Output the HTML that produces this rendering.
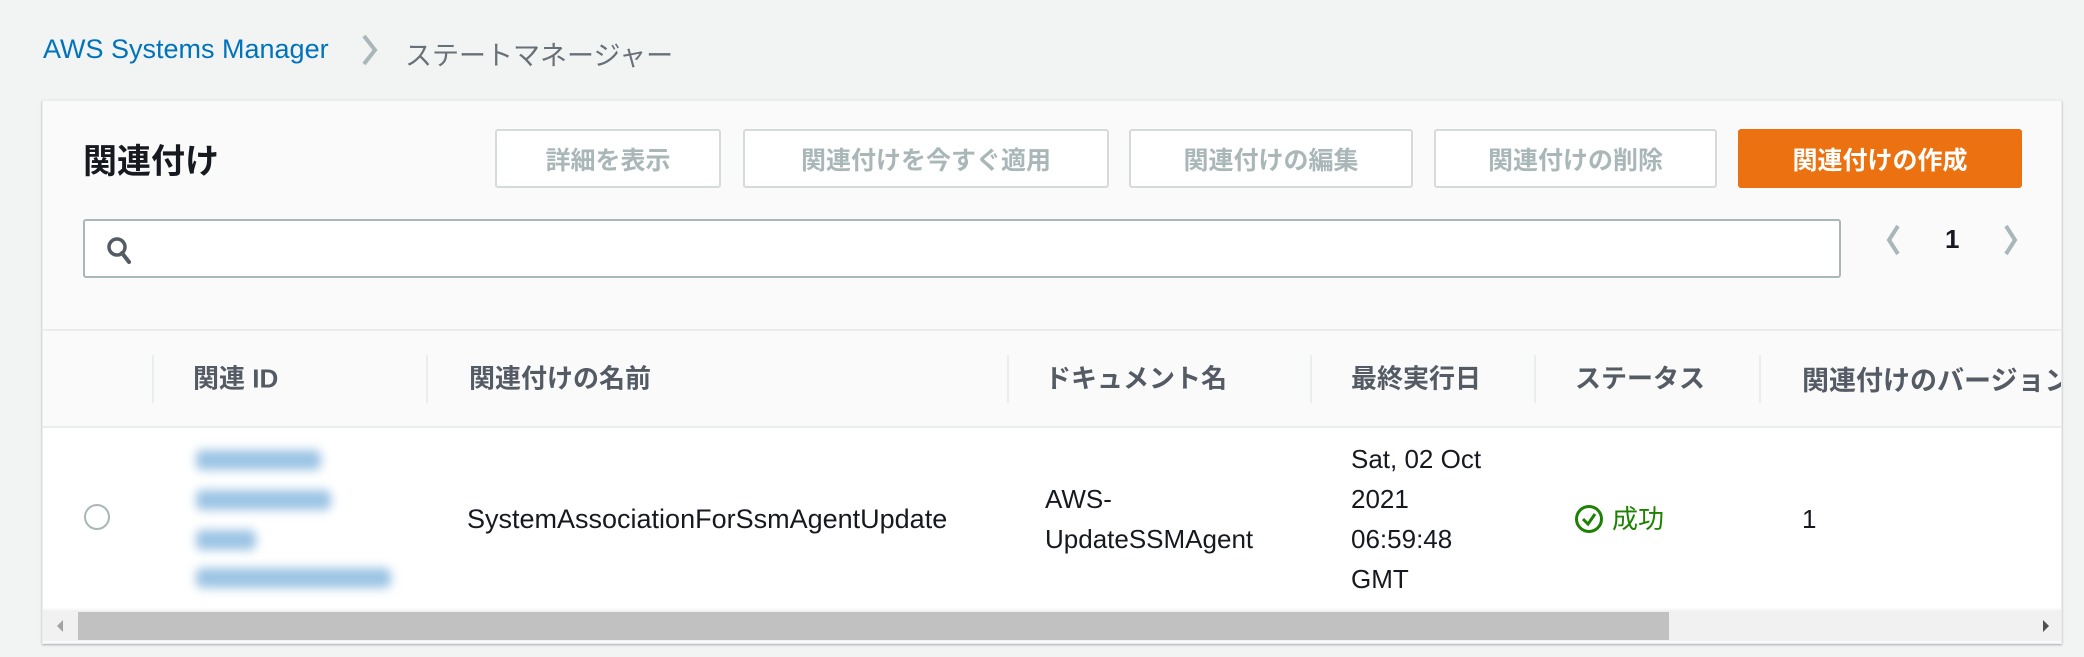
<!DOCTYPE html>
<html><head><meta charset="utf-8"><style>
*{margin:0;padding:0;box-sizing:border-box}
body{width:2084px;height:657px;background:#f2f3f3;font-family:"Liberation Sans","Noto Sans CJK JP",sans-serif;position:relative;overflow:hidden;color:#16191f}
.a{position:absolute;white-space:nowrap}
.btn{position:absolute;top:129px;height:59px;border:2px solid #d5dbdb;border-radius:3px;background:#fff;color:#aab7b8;font-weight:bold;font-size:25px;display:flex;align-items:center;justify-content:center}
.hd{position:absolute;top:377px;transform:translateY(-50%);font-size:26px;font-weight:bold;color:#545b64;white-space:nowrap}
.dv{position:absolute;top:355px;width:2px;height:48px;background:#eaeded}
.cell{position:absolute;font-size:26px;line-height:40px;color:#16191f;white-space:nowrap}
.blur{position:absolute;height:20px;background:#9cc4e4;filter:blur(5px);border-radius:6px}
</style></head><body>
<div class="a" style="left:43px;top:34px;font-size:27px;color:#0073bb">AWS Systems Manager</div>
<svg class="a" style="left:358px;top:33px" width="24" height="34"><path d="M6 3 L17 17 L6 31" fill="none" stroke="#aab7b8" stroke-width="4"/></svg>
<div class="a" style="left:405px;top:34px;font-size:27px;color:#687078">ステートマネージャー</div>

<div class="a" style="left:42px;top:100px;width:2020px;height:544px;background:#fafafa;border:1px solid #eaeded;box-shadow:0 1px 2px rgba(0,28,36,.3)"></div>
<div class="a" style="left:83px;top:134px;font-size:34px;font-weight:bold;color:#16191f">関連付け</div>
<div class="btn" style="left:495px;width:226px">詳細を表示</div>
<div class="btn" style="left:743px;width:366px">関連付けを今すぐ適用</div>
<div class="btn" style="left:1129px;width:284px">関連付けの編集</div>
<div class="btn" style="left:1434px;width:283px">関連付けの削除</div>
<div class="btn" style="left:1738px;width:284px;background:#ec7211;border-color:#ec7211;color:#fff">関連付けの作成</div>

<div class="a" style="left:83px;top:219px;width:1758px;height:59px;background:#fff;border:2px solid #aab7b8;border-radius:3px"></div>
<svg class="a" style="left:105px;top:235px" width="32" height="30"><circle cx="12" cy="12" r="8" fill="none" stroke="#545b64" stroke-width="3.5"/><path d="M17 18 L24 27" stroke="#545b64" stroke-width="4" stroke-linecap="round"/></svg>
<svg class="a" style="left:1882px;top:223px" width="22" height="34"><path d="M16 3 L7 17 L16 31" fill="none" stroke="#aab7b8" stroke-width="4"/></svg>
<div class="a" style="left:1945px;top:224px;font-size:26px;font-weight:bold;color:#16191f">1</div>
<svg class="a" style="left:2000px;top:223px" width="22" height="34"><path d="M6 3 L15 17 L6 31" fill="none" stroke="#aab7b8" stroke-width="4"/></svg>

<div class="a" style="left:43px;top:329px;width:2018px;height:2px;background:#eaeded"></div>
<div class="a" style="left:43px;top:426px;width:2018px;height:2px;background:#eaeded"></div>
<div class="a" style="left:43px;top:428px;width:2018px;height:180px;background:#fff"></div>
<div class="dv" style="left:152px"></div><div class="dv" style="left:426px"></div><div class="dv" style="left:1007px"></div><div class="dv" style="left:1310px"></div><div class="dv" style="left:1534px"></div><div class="dv" style="left:1759px"></div>
<div class="hd" style="left:193px">関連 ID</div>
<div class="hd" style="left:469px">関連付けの名前</div>
<div class="hd" style="left:1045px">ドキュメント名</div>
<div class="hd" style="left:1351px">最終実行日</div>
<div class="hd" style="left:1575px">ステータス</div>
<div class="a" style="left:1802px;top:359px;width:259px;overflow:hidden;font-size:27px;font-weight:bold;color:#545b64">関連付けのバージョン</div>

<div class="a" style="left:84px;top:504px;width:26px;height:26px;border:2px solid #aab7b8;border-radius:50%;background:#fff"></div>
<div class="blur" style="left:196px;top:450px;width:125px"></div>
<div class="blur" style="left:196px;top:490px;width:135px"></div>
<div class="blur" style="left:196px;top:530px;width:60px"></div>
<div class="blur" style="left:196px;top:568px;width:195px"></div>
<div class="cell" style="left:467px;top:499px;font-size:27px">SystemAssociationForSsmAgentUpdate</div>
<div class="cell" style="left:1045px;top:479px">AWS-<br>UpdateSSMAgent</div>
<div class="cell" style="left:1351px;top:439px">Sat, 02 Oct<br>2021<br>06:59:48<br>GMT</div>
<svg class="a" style="left:1574px;top:503px" width="32" height="32"><circle cx="15" cy="16" r="12.5" fill="none" stroke="#1d8102" stroke-width="3"/><path d="M9 16 L14 21 L21 11" fill="none" stroke="#1d8102" stroke-width="3"/></svg>
<div class="cell" style="left:1612px;top:499px;color:#1d8102">成功</div>
<div class="cell" style="left:1802px;top:499px">1</div>

<div class="a" style="left:43px;top:610px;width:2018px;height:31px;background:#f1f1f1"></div>
<div class="a" style="left:78px;top:612px;width:1591px;height:28px;background:#c1c1c1"></div>
<svg class="a" style="left:53px;top:617px" width="14" height="18"><path d="M10 3 L4 9 L10 15Z" fill="#a3a3a3"/></svg>
<svg class="a" style="left:2039px;top:617px" width="14" height="18"><path d="M4 3 L10 9 L4 15Z" fill="#505050"/></svg>
</body></html>
